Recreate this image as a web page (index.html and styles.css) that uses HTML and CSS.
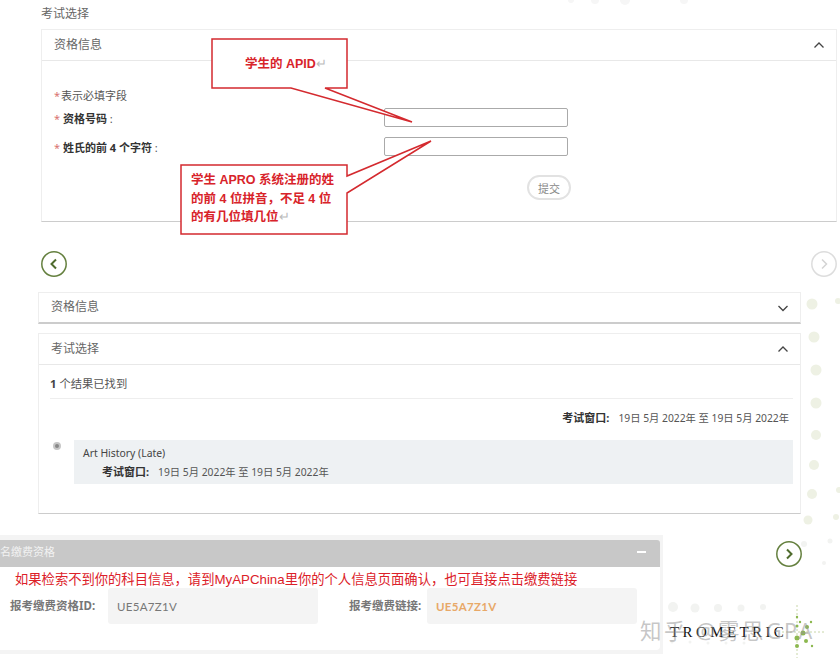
FILE: index.html
```html
<!DOCTYPE html>
<html lang="zh">
<head>
<meta charset="utf-8">
<title>考试选择</title>
<link rel="stylesheet" href="styles.css">
</head>
<body>
<svg class="decor" width="840" height="663" viewBox="0 0 840 663" aria-hidden="true">
  <g class="dots-top"><circle cx="571" cy="0" r="3"/><circle cx="595" cy="0" r="4"/><circle cx="625" cy="0" r="5"/><circle cx="684" cy="0" r="4"/></g>
  <g class="dots-olive">
    <circle cx="812" cy="304" r="5.5"/><circle cx="814" cy="337" r="5.5"/><circle cx="816" cy="370" r="5.5"/><circle cx="816" cy="403" r="5.5"/><circle cx="816" cy="435" r="5"/><circle cx="814" cy="465" r="5"/><circle cx="812" cy="494" r="5"/><circle cx="808" cy="520" r="4.5"/>
    <circle cx="838" cy="301" r="3"/><circle cx="839" cy="490" r="3"/><circle cx="836" cy="517" r="3"/>
  </g>
  <g class="dots-grey">
    <circle cx="804" cy="544" r="3"/><circle cx="830" cy="541" r="2.5"/><circle cx="824" cy="563" r="2"/>
    <circle cx="673" cy="607" r="5"/><circle cx="695" cy="608" r="4.5"/><circle cx="718" cy="608" r="4"/><circle cx="741" cy="608" r="3.5"/><circle cx="763" cy="607" r="3"/>
    <circle cx="672" cy="642" r="1.5"/><circle cx="690" cy="642" r="1.5"/><circle cx="708" cy="643" r="1.5"/><circle cx="726" cy="643" r="1.5"/><circle cx="744" cy="643" r="1.5"/>
  </g>
  <g class="star-lines"><path d="M797 605V658M782 632H824"/></g>
  <g class="star-dots">
    <circle cx="797" cy="626" r="1.5"/><circle cx="797" cy="638" r="2.5"/><circle cx="797" cy="646" r="2"/><circle cx="797" cy="617" r="1.2"/>
    <circle cx="803" cy="633" r="2.5"/><circle cx="807" cy="627" r="2"/><circle cx="811" cy="622" r="1.2"/><circle cx="806" cy="641" r="2"/><circle cx="812" cy="646" r="1.2"/><circle cx="800" cy="622" r="1.2"/>
  </g>
</svg>

<main class="page">
  <section class="step">
    <h2 class="step-title">考试选择</h2>
    <div class="card">
      <div class="card-head">
        <span>资格信息</span>
        <svg class="chev" width="12" height="8" viewBox="0 0 12 8"><path d="M1.500 6.500 6 2l4.500 4.500"/></svg>
      </div>
      <form class="form">
        <p class="hint"><span class="star">*</span>表示必填字段</p>
        <div class="field">
          <label class="field-label"><span class="star">*</span> <b>资格号码</b> :</label>
          <input class="field-input" type="text">
        </div>
        <div class="field">
          <label class="field-label"><span class="star">*</span> <b>姓氏的前 4 个字符</b> :</label>
          <input class="field-input" type="text">
        </div>
        <div class="form-actions"><button class="submit" type="button">提交</button></div>
      </form>
    </div>
    <div class="nav-row">
      <span class="nav-btn">
        <svg width="26" height="26" viewBox="0 0 26 26"><circle cx="13" cy="13" r="12.200"/><path d="M15 8.500 10.500 13l4.500 4.500"/></svg>
      </span>
      <span class="nav-btn is-off">
        <svg width="26" height="26" viewBox="0 0 26 26"><circle cx="13" cy="13" r="12.200"/><path d="M11 8.500 15.500 13 11 17.500"/></svg>
      </span>
    </div>
  </section>

  <section class="results">
    <div class="card card-closed">
      <div class="card-head">
        <span>资格信息</span>
        <svg class="chev" width="12" height="8" viewBox="0 0 12 8"><path d="M1.500 2 6 6.500 10.500 2"/></svg>
      </div>
    </div>
    <div class="card card-open">
      <div class="card-head">
        <span>考试选择</span>
        <svg class="chev" width="12" height="8" viewBox="0 0 12 8"><path d="M1.500 6.500 6 2l4.500 4.500"/></svg>
      </div>
      <div class="result-body">
        <p class="result-count"><b>1</b> 个结果已找到</p>
        <p class="window window-right"><b>考试窗口:</b><span class="window-date">19日 5月 2022年 至 19日 5月 2022年</span></p>
        <div class="option">
          <span class="radio"></span>
          <div class="option-box">
            <div class="option-name">Art History (Late)</div>
            <p class="window window-indent"><b>考试窗口:</b><span class="window-date">19日 5月 2022年 至 19日 5月 2022年</span></p>
          </div>
        </div>
      </div>
    </div>
  </section>

  <section class="bottom">
    <div class="fee-panel">
      <div class="fee-head">
        <span class="fee-title">报名缴费资格</span>
        <span class="fee-minus"></span>
      </div>
      <div class="fee-body">
        <p class="fee-note">如果检索不到你的科目信息，请到MyAPChina里你的个人信息页面确认，也可直接点击缴费链接</p>
        <div class="fee-fields">
          <span class="fee-label fee-label-id">报考缴费资格ID:</span>
          <span class="fee-value">UE5A7Z1V</span>
          <span class="fee-label fee-label-link">报考缴费链接:</span>
          <span class="fee-value fee-link">UE5A7Z1V</span>
        </div>
      </div>
    </div>
    <span class="nav-btn nav-next">
      <svg width="26" height="26" viewBox="0 0 26 26"><circle cx="13" cy="13" r="12.200"/><path d="M11 8.500 15.500 13 11 17.500"/></svg>
    </span>
  </section>
</main>

<div class="callout callout-apid">
  <svg class="callout-shape" width="135" height="49" viewBox="0 0 135 49"><polygon points="0,0 135,0 135,49 113,49 200,83 79,49 0,49"/></svg>
  <span class="callout-text">学生的 APID<i class="ret">↵</i></span>
</div>
<div class="callout callout-name">
  <svg class="callout-shape" width="166" height="69" viewBox="0 0 166 69"><polygon points="0,0 166,0 166,11 250,-24 166,28 166,69 0,69"/></svg>
  <span class="callout-text">学生 APRO 系统注册的姓<br>的前 4 位拼音，不足 4 位<br>的有几位填几位<i class="ret">↵</i></span>
</div>

<div class="brand">TROMETRIC</div>
<div class="watermark">知乎 @雾思GPA</div>
</body>
</html>
```

FILE: styles.css
```css
* { box-sizing: border-box; }

html, body {
  margin: 0;
  padding: 0;
}

body {
  position: relative;
  width: 840px;
  height: 663px;
  overflow: hidden;
  background: #fff;
  color: #555;
  font-family: "Noto Sans", "Noto Sans CJK SC", sans-serif;
  font-size: 11px;
}

p, h2 { margin: 0; }
b { color: #333; font-weight: 700; }

.decor { position: absolute; left: 0; top: 0; }
.dots-top circle { fill: #f6f6f6; }
.dots-olive circle { fill: #eef1e4; }
.dots-grey circle { fill: #f2f3f1; }
.star-lines path { fill: none; stroke: #c8d6a8; stroke-width: 1; stroke-dasharray: 2 2; }
.star-dots circle { fill: #8cb84e; }

.page { position: relative; display: flex; flex-direction: column; }

.step { padding: 0 3px 0 41px; }
.step-title {
  height: 29px;
  font-size: 12px;
  font-weight: 400;
  line-height: 27px;
  color: #666;
}

.card {
  background: #fff;
  border: 1px solid #eee;
  border-bottom-color: #ccc;
}
.card-head {
  display: flex;
  align-items: center;
  justify-content: space-between;
  height: 31px;
  padding: 0 11px 0 12px;
  border-bottom: 1px solid #e8e8e8;
  font-size: 12px;
  color: #666;
}
.card-head span { margin-bottom: 3px; }

.form {
  display: flex;
  flex-direction: column;
  width: 529px;
  height: 160px;
  padding: 27px 0 0 12px;
}
.hint { height: 20px; line-height: 16px; }
.hint .star { margin-right: 1px; }
.star { color: #d9736f; }
.field { display: flex; align-items: center; height: 19px; margin-bottom: 10px; }
.field-label { width: 330px; }
.field-input {
  width: 184px;
  height: 19px;
  padding: 0;
  background: #fff;
  border: 1px solid #aaa;
  border-radius: 2px;
}
.form-actions { display: flex; justify-content: flex-end; margin-top: 9px; }
.submit {
  width: 44px;
  height: 25px;
  padding: 0;
  background: #fff;
  border: 2px solid #e2e2e2;
  border-radius: 13px;
  color: #888;
  font: inherit;
  font-size: 11px;
}

.nav-row { display: flex; justify-content: space-between; margin-top: 29px; }
.nav-btn { display: block; width: 26px; height: 26px; }
.nav-btn svg { display: block; }
.nav-btn circle { fill: #fff; stroke: #65803f; stroke-width: 1.500; }
.nav-btn path { fill: none; stroke: #4f6b2d; stroke-width: 2; }
.is-off circle { stroke: #ddd; }
.is-off path { stroke: #d4d4d4; stroke-width: 1.500; }

.chev { display: block; }
.chev path { fill: none; stroke: #444; stroke-width: 1.300; }

.results {
  display: flex;
  flex-direction: column;
  gap: 9px;
  width: 801px;
  margin-top: 15px;
  padding-left: 38px;
}
.card-closed { height: 32px; border-bottom: 2px solid #ccc; }
.card-closed .card-head { height: 29px; border-bottom: 0; }
.card-open { height: 181px; }

.result-body { display: flex; flex-direction: column; padding: 0 7px 0 11px; }
.result-count {
  height: 34px;
  padding-top: 10px;
  font-size: 11.300px;
  line-height: 17px;
  border-bottom: 1px solid #eee;
}
.result-count b { color: #444; }
.window b { margin-right: 9px; }
.window-date { font-size: 10.300px; }
.window-right { margin-top: 10px; padding-right: 4px; line-height: 17px; text-align: right; }

.option { display: flex; margin-top: 13px; }
.radio {
  flex: none;
  width: 8px;
  height: 8px;
  margin: 2px 13px 0 3px;
  border: 2px solid #c6c6c6;
  border-radius: 50%;
  background: #888;
}
.option-box {
  flex: 1;
  height: 44px;
  padding: 5px 9px 0;
  background: #eef1f3;
}
.option-name { height: 19px; font-size: 10.400px; line-height: 16px; color: #444; }
.window-indent { padding-left: 19px; line-height: 16px; }

.bottom { display: flex; align-items: flex-start; gap: 113px; margin-top: 21px; }
.fee-panel { width: 663px; height: 119px; padding: 5px 3px 4px 0; background: #f4f4f4; }
.fee-head {
  display: flex;
  align-items: center;
  justify-content: space-between;
  height: 27px;
  padding-right: 14px;
  overflow: hidden;
  background: #c8c8c8;
  border-top-right-radius: 3px;
}
.fee-title { margin: 0 0 5px -11px; color: #f2f2f2; font-size: 11px; }
.fee-minus { width: 9px; height: 2px; margin-bottom: 3px; background: #fff; }
.fee-body { height: 83px; background: #fff; border-bottom-right-radius: 4px; }
.fee-note {
  height: 21px;
  padding: 3px 0 0 15px;
  color: #dc2028;
  font-family: "Liberation Sans", "Noto Sans CJK SC", sans-serif;
  font-size: 13.300px;
  line-height: 19px;
  white-space: nowrap;
}
.fee-fields { display: flex; align-items: center; height: 36px; }
.fee-label { margin-bottom: 2px; color: #777; font-size: 11.500px; font-weight: 700; white-space: nowrap; }
.fee-label-id { width: 108px; padding-left: 10px; }
.fee-label-link { width: 109px; padding-left: 31px; }
.fee-value {
  width: 210px;
  height: 36px;
  padding-left: 9px;
  background: #f4f4f4;
  border-radius: 3px;
  color: #777;
  font-family: Lato, sans-serif;
  font-size: 11.500px;
  line-height: 37px;
  letter-spacing: .3px;
}
.fee-link { color: #e8a868; font-weight: 700; }
.nav-next { margin-top: 6px; }

.callout {
  position: absolute;
  color: #d8232a;
  font-family: "Liberation Sans", "Noto Sans CJK SC", sans-serif;
  font-size: 12.500px;
  font-weight: 700;
}
.callout-shape { position: absolute; left: 0; top: 0; overflow: visible; }
.callout-shape polygon { fill: #fff; stroke: #d42a2f; stroke-width: 1.500; }
.callout-text { position: relative; display: block; }
.ret { color: #bbb; font-style: normal; font-weight: 400; }
.callout-apid { left: 212px; top: 39px; width: 135px; height: 49px; }
.callout-apid .callout-text { padding: 16px 0 0 33px; line-height: 18px; }
.callout-name { left: 181px; top: 165px; width: 166px; height: 69px; }
.callout-name .callout-text { padding: 6px 0 0 10px; line-height: 18.500px; }

.brand {
  position: absolute;
  left: 670px;
  top: 623px;
  color: #111;
  font-family: "Liberation Serif", serif;
  font-size: 15px;
  line-height: 18px;
  letter-spacing: 3.400px;
}
.watermark {
  position: absolute;
  left: 640px;
  top: 616px;
  color: rgba(150, 150, 150, .55);
  font-size: 21.500px;
  line-height: 30px;
  letter-spacing: 2.500px;
  white-space: nowrap;
}
```
